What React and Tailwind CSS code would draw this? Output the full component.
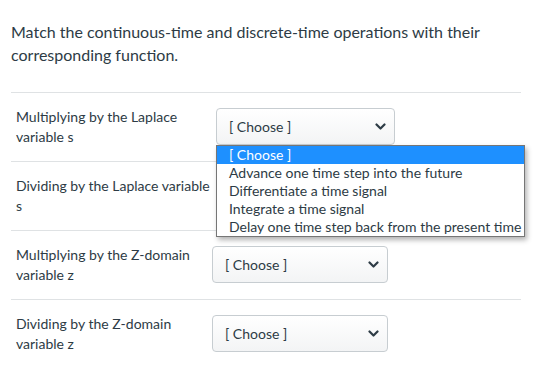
import React from 'react';

const options = [
  '[ Choose ]',
  'Advance one time step into the future',
  'Differentiate a time signal',
  'Integrate a time signal',
  'Delay one time step back from the present time',
];

const Chevron = () => (
  <svg width="11" height="8" viewBox="0 0 11 8" className="text-[#2d3b45]">
    <path d="M1.5 1.5 L5.5 5.5 L9.5 1.5" fill="none" stroke="currentColor" strokeWidth="2.2" strokeLinecap="round" strokeLinejoin="round" />
  </svg>
);

const FakeSelect = ({ width, open }) => (
  <div className="relative" style={{ width }}>
    <div className="h-[37px] flex items-center justify-between pl-[12px] pr-[8px] border border-[#c7cdd1] rounded-[4px] bg-gradient-to-b from-white to-[#f3f4f5] text-[14px] text-[#2d3b45]">
      <span>[ Choose ]</span>
      <Chevron />
    </div>
    {open && (
      <div className="absolute left-0 top-[37px] w-[309px] bg-white border border-[#767676] shadow-[2px_3px_5px_rgba(0,0,0,0.3)] z-10">
        {options.map((opt, i) => (
          <div
            key={opt}
            className={`h-[18px] leading-[18px] pl-[12px] text-[14px] whitespace-nowrap ${i === 0 ? 'bg-[#1e90ff] text-white' : 'text-[#2d3b45]'}`}
          >
            {opt}
          </div>
        ))}
      </div>
    )}
  </div>
);

const rows = [
  { label: 'Multiplying by the Laplace variable s', labelW: 200, selW: 179, open: true },
  { label: 'Dividing by the Laplace variable s', labelW: 200, selW: 179, hidden: true },
  { label: 'Multiplying by the Z-domain variable z', labelW: 196, selW: 176 },
  { label: 'Dividing by the Z-domain variable z', labelW: 196, selW: 176 },
];

export default function App() {
  return (
    <div className="w-[533px] h-[378px] bg-white overflow-hidden text-[#2d3b45]" style={{ fontFamily: 'Lato, "Open Sans", sans-serif' }}>
      <div className="w-[510px] ml-[11px]">
        <p className="pt-[20px] pb-[26px] text-[16px] leading-[23px] text-[#2d3b45]">
          Match the continuous-time and discrete-time operations with their corresponding function.
        </p>
        {rows.map((r) => (
          <div key={r.label} className="border-t border-[#dfe2e4] h-[69px] flex items-start pl-[5px]">
            <div className="pt-[14px] text-[14px] leading-[20px]" style={{ width: r.labelW }}>
              {r.label}
            </div>
            {/* second select sits under the open list */}
            <div className={`pt-[15px] ${r.hidden ? 'invisible' : ''}`}>
              <FakeSelect width={r.selW} open={r.open} />
            </div>
          </div>
        ))}
      </div>
    </div>
  );
}
